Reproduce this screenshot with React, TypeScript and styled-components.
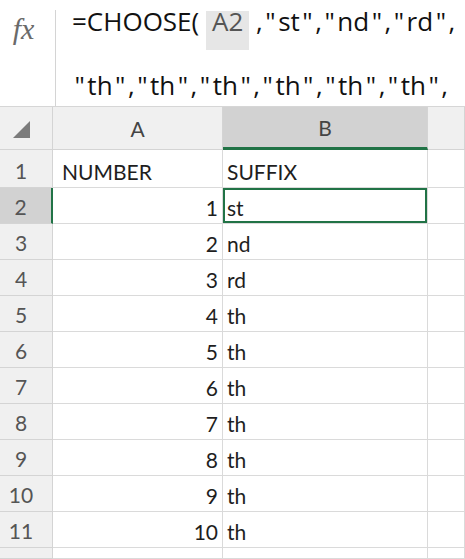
import React from 'react';
import styled, { createGlobalStyle } from 'styled-components';

const GlobalStyle = createGlobalStyle`
	html, body {
		margin: 0;
		padding: 0;
		background: #fff;
		overflow: hidden;
	}
`;

const green = '#217346';
const gridLine = '#dadada';

const Sheet = styled.div`
	width: 465px;
	height: 559px;
	overflow: hidden;
	font-family: Lato, 'Open Sans', sans-serif;
	color: #1e1e1e;
`;

const FormulaBar = styled.div`
	display: flex;
	height: 106px;
	border-bottom: 1px solid #d6d6d6;
`;

const FxBox = styled.div`
	width: 56px;
	margin-top: 10px;
	padding: 2px 8px 0 0;
	border-right: 1px solid #d4d4d4;
	display: flex;
	justify-content: center;
	box-sizing: border-box;
	font-family: 'Liberation Serif', serif;
	font-style: italic;
	font-size: 30px;
	color: #6a6a6a;
`;

const FormulaText = styled.div`
	flex: 1;
	padding-left: 16px;
	margin-top: -11px;
	font-family: 'Open Sans', sans-serif;
	font-size: 26px;
	line-height: 64px;
	color: #111;
	white-space: pre;
`;

const RefChip = styled.span`
	display: inline-block;
	line-height: 20px;
	padding: 0 6px 19px;
	background: #e6e6e6;
	color: #555;
`;

// string literals in the formula get a little air around their quote marks
const Quote = styled.span`
	padding: 0 2.5px;
`;

const Grid = styled.div`
	display: grid;
	grid-template-columns: 53px 170px 205px 1fr;
	grid-template-rows: 43px 38px repeat(10, 36px) 11px;
`;

const HeadCell = styled.div<{ $active?: boolean }>`
	display: flex;
	align-items: center;
	justify-content: center;
	box-sizing: border-box;
	background: ${(p) => (p.$active ? '#d2d2d2' : '#f0f0f0')};
	border-right: 1px solid #d4d4d4;
	border-bottom: ${(p) => (p.$active ? `3px solid ${green}` : '1px solid #d4d4d4')};
	font-size: 21px;
	color: #444;
`;

const RowHead = styled.div<{ $active?: boolean }>`
	display: flex;
	align-items: flex-end;
	padding: 0 10px 4px 0;
	justify-content: center;
	box-sizing: border-box;
	background: ${(p) => (p.$active ? '#d2d2d2' : '#f0f0f0')};
	border-right: ${(p) => (p.$active ? `2px solid ${green}` : '1px solid #d4d4d4')};
	border-bottom: 1px solid #d4d4d4;
	font-size: 21px;
	color: #555;
`;

const Corner = styled.div`
	display: flex;
	align-items: flex-end;
	padding: 0 0 11px 13px;
	box-sizing: border-box;
	background: #f0f0f0;
	border-right: 1px solid #d4d4d4;
	border-bottom: 1px solid #d4d4d4;
`;

const Cell = styled.div<{ $align?: 'left' | 'right'; $selected?: boolean; $indent?: number }>`
	display: flex;
	align-items: flex-end;
	justify-content: ${(p) => (p.$align === 'right' ? 'flex-end' : 'flex-start')};
	padding: 0 4px 3px ${(p) => p.$indent ?? 4}px;
	box-sizing: border-box;
	border-right: 1px solid ${gridLine};
	border-bottom: 1px solid ${gridLine};
	box-shadow: ${(p) => (p.$selected ? `inset 0 0 0 2px ${green}` : 'none')};
	font-size: 21px;
	white-space: nowrap;
`;

const suffixes = ['st', 'nd', 'rd', 'th', 'th', 'th', 'th', 'th', 'th', 'th'];

function withQuotes(text: string) {
	return text.split('"').map((part, i) => (
		<React.Fragment key={i}>
			{i > 0 && <Quote>"</Quote>}
			{part}
		</React.Fragment>
	));
}

function CornerMark() {
	return (
		<svg width='17' height='17' viewBox='0 0 17 17'>
			<polygon points='17,0 17,17 0,17' fill='#7b7b7b' />
		</svg>
	);
}

function App() {
	return (
		<Sheet>
			<GlobalStyle />
			<FormulaBar>
				<FxBox>fx</FxBox>
				<FormulaText>
					{'=CHOOSE( '}
					<RefChip>A2</RefChip>
					{withQuotes(' ,"st","nd","rd",\n"th","th","th","th","th","th",')}
				</FormulaText>
			</FormulaBar>

			<Grid>
				<Corner>
					<CornerMark />
				</Corner>
				<HeadCell>A</HeadCell>
				<HeadCell $active>B</HeadCell>
				<HeadCell />

				<RowHead>1</RowHead>
				<Cell $indent={9}>NUMBER</Cell>
				<Cell>SUFFIX</Cell>
				<Cell />

				{suffixes.map((s, i) => (
					<React.Fragment key={i}>
						<RowHead $active={i === 0}>{i + 2}</RowHead>
						<Cell $align='right'>{i + 1}</Cell>
						<Cell $selected={i === 0}>{s}</Cell>
						<Cell />
					</React.Fragment>
				))}

				<RowHead />
				<Cell />
				<Cell />
				<Cell />
			</Grid>
		</Sheet>
	);
}

export default App;
